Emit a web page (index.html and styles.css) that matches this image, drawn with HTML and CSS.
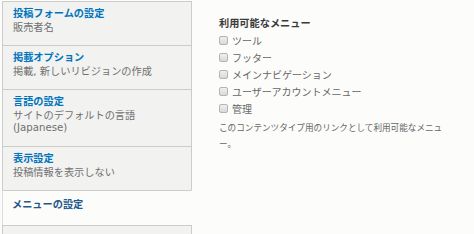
FILE: index.html
```html
<!DOCTYPE html>
<html lang="ja">
<head>
<meta charset="utf-8">
<link rel="stylesheet" href="styles.css">
</head>
<body>
<div class="vt">
  <ul class="tabs">
    <li class="tab"><a class="title">投稿フォームの設定</a><span class="summary">販売者名</span></li>
    <li class="tab"><a class="title">掲載オプション</a><span class="summary">掲載, 新しいリビジョンの作成</span></li>
    <li class="tab tall"><a class="title">言語の設定</a><span class="summary">サイトのデフォルトの言語<br>(Japanese)</span></li>
    <li class="tab"><a class="title">表示設定</a><span class="summary">投稿情報を表示しない</span></li>
    <li class="tab active"><a class="title">メニューの設定</a></li>
    <li class="tab stub"></li>
  </ul>
  <div class="pane">
    <div class="label">利用可能なメニュー</div>
    <label class="opt"><input type="checkbox"><span>ツール</span></label>
    <label class="opt"><input type="checkbox"><span>フッター</span></label>
    <label class="opt"><input type="checkbox"><span>メインナビゲーション</span></label>
    <label class="opt"><input type="checkbox"><span>ユーザーアカウントメニュー</span></label>
    <label class="opt"><input type="checkbox"><span>管理</span></label>
    <div class="desc">このコンテンツタイプ用のリンクとして利用可能なメニュー。</div>
  </div>
</div>
</body>
</html>
```
FILE: styles.css
```css
html, body {
  margin: 0;
  padding: 0;
}
body {
  width: 474px;
  height: 234px;
  overflow: hidden;
  background: #fcfcfa;
  font-family: "DejaVu Sans", "Noto Sans CJK JP", sans-serif;
  color: #333;
}
.vt {
  display: flex;
  padding-top: 1px;
}
.tabs {
  list-style: none;
  margin: 0 0 0 2px;
  padding: 0;
  width: 190px;
  flex: none;
}
.tab {
  background: #f2f2f0;
  border: 1px solid #ccc;
  border-bottom: 0;
  padding: 5px 10px 11px 10px;
}
.tab.tall {
  padding-bottom: 12px;
}
.tab.stub {
  padding: 0;
  height: 8px;
}
.title {
  display: block;
  font-size: 10.2px;
  line-height: 14px;
  font-weight: bold;
  color: #0074bd;
  white-space: nowrap;
}
.summary {
  display: block;
  margin-top: 1px;
  font-size: 10.2px;
  line-height: 12px;
  color: #707070;
  white-space: nowrap;
}
.tab.active {
  background: #fcfcfa;
  border-left-color: #ddd;
  border-right-color: #fcfcfa;
  padding: 7px 10px 13px 9px;
}
.tab.active .title {
  color: #22598a;
}
.pane {
  flex: 1;
  padding: 15px 0 0 27px;
}
.label {
  font-size: 10.2px;
  line-height: 16px;
  font-weight: bold;
  color: #3a3a3a;
}
.opt {
  display: flex;
  align-items: center;
  height: 17px;
  font-size: 10px;
  color: #666;
}
.opt input {
  appearance: none;
  -webkit-appearance: none;
  margin: 0 4px 0 0;
  width: 9px;
  height: 9px;
  border: 1px solid #b4b4b4;
  border-radius: 2px;
  background: linear-gradient(#f0f0f0, #d8d8d8);
  box-sizing: border-box;
  flex: none;
}
.desc {
  margin-top: 3px;
  width: 228px;
  font-size: 8.6px;
  line-height: 16px;
  color: #666;
}
```
